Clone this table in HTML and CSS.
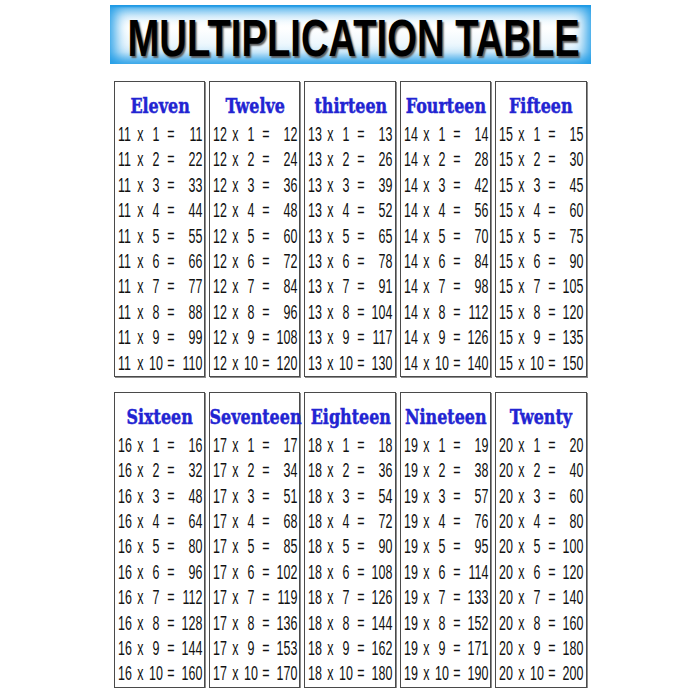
FILE: index.html
```html
<!DOCTYPE html>
<html>
<head>
<meta charset="utf-8">
<title>Multiplication Table</title>
<link rel="stylesheet" href="styles.css">
</head>
<body>
<div class="page">
  <div class="banner"><span class="banner-title">MULTIPLICATION TABLE</span></div>
  <div class="tables">
    <div class="card">
      <div class="name"><span>Eleven</span></div>
      <div class="row"><span class="a">11</span><span class="x">x</span><span class="b">1</span><span class="e">=</span><span class="c">11</span></div>
      <div class="row"><span class="a">11</span><span class="x">x</span><span class="b">2</span><span class="e">=</span><span class="c">22</span></div>
      <div class="row"><span class="a">11</span><span class="x">x</span><span class="b">3</span><span class="e">=</span><span class="c">33</span></div>
      <div class="row"><span class="a">11</span><span class="x">x</span><span class="b">4</span><span class="e">=</span><span class="c">44</span></div>
      <div class="row"><span class="a">11</span><span class="x">x</span><span class="b">5</span><span class="e">=</span><span class="c">55</span></div>
      <div class="row"><span class="a">11</span><span class="x">x</span><span class="b">6</span><span class="e">=</span><span class="c">66</span></div>
      <div class="row"><span class="a">11</span><span class="x">x</span><span class="b">7</span><span class="e">=</span><span class="c">77</span></div>
      <div class="row"><span class="a">11</span><span class="x">x</span><span class="b">8</span><span class="e">=</span><span class="c">88</span></div>
      <div class="row"><span class="a">11</span><span class="x">x</span><span class="b">9</span><span class="e">=</span><span class="c">99</span></div>
      <div class="row"><span class="a">11</span><span class="x">x</span><span class="b">10</span><span class="e">=</span><span class="c">110</span></div>
    </div>
    <div class="card">
      <div class="name"><span>Twelve</span></div>
      <div class="row"><span class="a">12</span><span class="x">x</span><span class="b">1</span><span class="e">=</span><span class="c">12</span></div>
      <div class="row"><span class="a">12</span><span class="x">x</span><span class="b">2</span><span class="e">=</span><span class="c">24</span></div>
      <div class="row"><span class="a">12</span><span class="x">x</span><span class="b">3</span><span class="e">=</span><span class="c">36</span></div>
      <div class="row"><span class="a">12</span><span class="x">x</span><span class="b">4</span><span class="e">=</span><span class="c">48</span></div>
      <div class="row"><span class="a">12</span><span class="x">x</span><span class="b">5</span><span class="e">=</span><span class="c">60</span></div>
      <div class="row"><span class="a">12</span><span class="x">x</span><span class="b">6</span><span class="e">=</span><span class="c">72</span></div>
      <div class="row"><span class="a">12</span><span class="x">x</span><span class="b">7</span><span class="e">=</span><span class="c">84</span></div>
      <div class="row"><span class="a">12</span><span class="x">x</span><span class="b">8</span><span class="e">=</span><span class="c">96</span></div>
      <div class="row"><span class="a">12</span><span class="x">x</span><span class="b">9</span><span class="e">=</span><span class="c">108</span></div>
      <div class="row"><span class="a">12</span><span class="x">x</span><span class="b">10</span><span class="e">=</span><span class="c">120</span></div>
    </div>
    <div class="card">
      <div class="name"><span>thirteen</span></div>
      <div class="row"><span class="a">13</span><span class="x">x</span><span class="b">1</span><span class="e">=</span><span class="c">13</span></div>
      <div class="row"><span class="a">13</span><span class="x">x</span><span class="b">2</span><span class="e">=</span><span class="c">26</span></div>
      <div class="row"><span class="a">13</span><span class="x">x</span><span class="b">3</span><span class="e">=</span><span class="c">39</span></div>
      <div class="row"><span class="a">13</span><span class="x">x</span><span class="b">4</span><span class="e">=</span><span class="c">52</span></div>
      <div class="row"><span class="a">13</span><span class="x">x</span><span class="b">5</span><span class="e">=</span><span class="c">65</span></div>
      <div class="row"><span class="a">13</span><span class="x">x</span><span class="b">6</span><span class="e">=</span><span class="c">78</span></div>
      <div class="row"><span class="a">13</span><span class="x">x</span><span class="b">7</span><span class="e">=</span><span class="c">91</span></div>
      <div class="row"><span class="a">13</span><span class="x">x</span><span class="b">8</span><span class="e">=</span><span class="c">104</span></div>
      <div class="row"><span class="a">13</span><span class="x">x</span><span class="b">9</span><span class="e">=</span><span class="c">117</span></div>
      <div class="row"><span class="a">13</span><span class="x">x</span><span class="b">10</span><span class="e">=</span><span class="c">130</span></div>
    </div>
    <div class="card">
      <div class="name"><span>Fourteen</span></div>
      <div class="row"><span class="a">14</span><span class="x">x</span><span class="b">1</span><span class="e">=</span><span class="c">14</span></div>
      <div class="row"><span class="a">14</span><span class="x">x</span><span class="b">2</span><span class="e">=</span><span class="c">28</span></div>
      <div class="row"><span class="a">14</span><span class="x">x</span><span class="b">3</span><span class="e">=</span><span class="c">42</span></div>
      <div class="row"><span class="a">14</span><span class="x">x</span><span class="b">4</span><span class="e">=</span><span class="c">56</span></div>
      <div class="row"><span class="a">14</span><span class="x">x</span><span class="b">5</span><span class="e">=</span><span class="c">70</span></div>
      <div class="row"><span class="a">14</span><span class="x">x</span><span class="b">6</span><span class="e">=</span><span class="c">84</span></div>
      <div class="row"><span class="a">14</span><span class="x">x</span><span class="b">7</span><span class="e">=</span><span class="c">98</span></div>
      <div class="row"><span class="a">14</span><span class="x">x</span><span class="b">8</span><span class="e">=</span><span class="c">112</span></div>
      <div class="row"><span class="a">14</span><span class="x">x</span><span class="b">9</span><span class="e">=</span><span class="c">126</span></div>
      <div class="row"><span class="a">14</span><span class="x">x</span><span class="b">10</span><span class="e">=</span><span class="c">140</span></div>
    </div>
    <div class="card">
      <div class="name"><span>Fifteen</span></div>
      <div class="row"><span class="a">15</span><span class="x">x</span><span class="b">1</span><span class="e">=</span><span class="c">15</span></div>
      <div class="row"><span class="a">15</span><span class="x">x</span><span class="b">2</span><span class="e">=</span><span class="c">30</span></div>
      <div class="row"><span class="a">15</span><span class="x">x</span><span class="b">3</span><span class="e">=</span><span class="c">45</span></div>
      <div class="row"><span class="a">15</span><span class="x">x</span><span class="b">4</span><span class="e">=</span><span class="c">60</span></div>
      <div class="row"><span class="a">15</span><span class="x">x</span><span class="b">5</span><span class="e">=</span><span class="c">75</span></div>
      <div class="row"><span class="a">15</span><span class="x">x</span><span class="b">6</span><span class="e">=</span><span class="c">90</span></div>
      <div class="row"><span class="a">15</span><span class="x">x</span><span class="b">7</span><span class="e">=</span><span class="c">105</span></div>
      <div class="row"><span class="a">15</span><span class="x">x</span><span class="b">8</span><span class="e">=</span><span class="c">120</span></div>
      <div class="row"><span class="a">15</span><span class="x">x</span><span class="b">9</span><span class="e">=</span><span class="c">135</span></div>
      <div class="row"><span class="a">15</span><span class="x">x</span><span class="b">10</span><span class="e">=</span><span class="c">150</span></div>
    </div>
    <div class="card">
      <div class="name"><span>Sixteen</span></div>
      <div class="row"><span class="a">16</span><span class="x">x</span><span class="b">1</span><span class="e">=</span><span class="c">16</span></div>
      <div class="row"><span class="a">16</span><span class="x">x</span><span class="b">2</span><span class="e">=</span><span class="c">32</span></div>
      <div class="row"><span class="a">16</span><span class="x">x</span><span class="b">3</span><span class="e">=</span><span class="c">48</span></div>
      <div class="row"><span class="a">16</span><span class="x">x</span><span class="b">4</span><span class="e">=</span><span class="c">64</span></div>
      <div class="row"><span class="a">16</span><span class="x">x</span><span class="b">5</span><span class="e">=</span><span class="c">80</span></div>
      <div class="row"><span class="a">16</span><span class="x">x</span><span class="b">6</span><span class="e">=</span><span class="c">96</span></div>
      <div class="row"><span class="a">16</span><span class="x">x</span><span class="b">7</span><span class="e">=</span><span class="c">112</span></div>
      <div class="row"><span class="a">16</span><span class="x">x</span><span class="b">8</span><span class="e">=</span><span class="c">128</span></div>
      <div class="row"><span class="a">16</span><span class="x">x</span><span class="b">9</span><span class="e">=</span><span class="c">144</span></div>
      <div class="row"><span class="a">16</span><span class="x">x</span><span class="b">10</span><span class="e">=</span><span class="c">160</span></div>
    </div>
    <div class="card">
      <div class="name"><span>Seventeen</span></div>
      <div class="row"><span class="a">17</span><span class="x">x</span><span class="b">1</span><span class="e">=</span><span class="c">17</span></div>
      <div class="row"><span class="a">17</span><span class="x">x</span><span class="b">2</span><span class="e">=</span><span class="c">34</span></div>
      <div class="row"><span class="a">17</span><span class="x">x</span><span class="b">3</span><span class="e">=</span><span class="c">51</span></div>
      <div class="row"><span class="a">17</span><span class="x">x</span><span class="b">4</span><span class="e">=</span><span class="c">68</span></div>
      <div class="row"><span class="a">17</span><span class="x">x</span><span class="b">5</span><span class="e">=</span><span class="c">85</span></div>
      <div class="row"><span class="a">17</span><span class="x">x</span><span class="b">6</span><span class="e">=</span><span class="c">102</span></div>
      <div class="row"><span class="a">17</span><span class="x">x</span><span class="b">7</span><span class="e">=</span><span class="c">119</span></div>
      <div class="row"><span class="a">17</span><span class="x">x</span><span class="b">8</span><span class="e">=</span><span class="c">136</span></div>
      <div class="row"><span class="a">17</span><span class="x">x</span><span class="b">9</span><span class="e">=</span><span class="c">153</span></div>
      <div class="row"><span class="a">17</span><span class="x">x</span><span class="b">10</span><span class="e">=</span><span class="c">170</span></div>
    </div>
    <div class="card">
      <div class="name"><span>Eighteen</span></div>
      <div class="row"><span class="a">18</span><span class="x">x</span><span class="b">1</span><span class="e">=</span><span class="c">18</span></div>
      <div class="row"><span class="a">18</span><span class="x">x</span><span class="b">2</span><span class="e">=</span><span class="c">36</span></div>
      <div class="row"><span class="a">18</span><span class="x">x</span><span class="b">3</span><span class="e">=</span><span class="c">54</span></div>
      <div class="row"><span class="a">18</span><span class="x">x</span><span class="b">4</span><span class="e">=</span><span class="c">72</span></div>
      <div class="row"><span class="a">18</span><span class="x">x</span><span class="b">5</span><span class="e">=</span><span class="c">90</span></div>
      <div class="row"><span class="a">18</span><span class="x">x</span><span class="b">6</span><span class="e">=</span><span class="c">108</span></div>
      <div class="row"><span class="a">18</span><span class="x">x</span><span class="b">7</span><span class="e">=</span><span class="c">126</span></div>
      <div class="row"><span class="a">18</span><span class="x">x</span><span class="b">8</span><span class="e">=</span><span class="c">144</span></div>
      <div class="row"><span class="a">18</span><span class="x">x</span><span class="b">9</span><span class="e">=</span><span class="c">162</span></div>
      <div class="row"><span class="a">18</span><span class="x">x</span><span class="b">10</span><span class="e">=</span><span class="c">180</span></div>
    </div>
    <div class="card">
      <div class="name"><span>Nineteen</span></div>
      <div class="row"><span class="a">19</span><span class="x">x</span><span class="b">1</span><span class="e">=</span><span class="c">19</span></div>
      <div class="row"><span class="a">19</span><span class="x">x</span><span class="b">2</span><span class="e">=</span><span class="c">38</span></div>
      <div class="row"><span class="a">19</span><span class="x">x</span><span class="b">3</span><span class="e">=</span><span class="c">57</span></div>
      <div class="row"><span class="a">19</span><span class="x">x</span><span class="b">4</span><span class="e">=</span><span class="c">76</span></div>
      <div class="row"><span class="a">19</span><span class="x">x</span><span class="b">5</span><span class="e">=</span><span class="c">95</span></div>
      <div class="row"><span class="a">19</span><span class="x">x</span><span class="b">6</span><span class="e">=</span><span class="c">114</span></div>
      <div class="row"><span class="a">19</span><span class="x">x</span><span class="b">7</span><span class="e">=</span><span class="c">133</span></div>
      <div class="row"><span class="a">19</span><span class="x">x</span><span class="b">8</span><span class="e">=</span><span class="c">152</span></div>
      <div class="row"><span class="a">19</span><span class="x">x</span><span class="b">9</span><span class="e">=</span><span class="c">171</span></div>
      <div class="row"><span class="a">19</span><span class="x">x</span><span class="b">10</span><span class="e">=</span><span class="c">190</span></div>
    </div>
    <div class="card">
      <div class="name"><span>Twenty</span></div>
      <div class="row"><span class="a">20</span><span class="x">x</span><span class="b">1</span><span class="e">=</span><span class="c">20</span></div>
      <div class="row"><span class="a">20</span><span class="x">x</span><span class="b">2</span><span class="e">=</span><span class="c">40</span></div>
      <div class="row"><span class="a">20</span><span class="x">x</span><span class="b">3</span><span class="e">=</span><span class="c">60</span></div>
      <div class="row"><span class="a">20</span><span class="x">x</span><span class="b">4</span><span class="e">=</span><span class="c">80</span></div>
      <div class="row"><span class="a">20</span><span class="x">x</span><span class="b">5</span><span class="e">=</span><span class="c">100</span></div>
      <div class="row"><span class="a">20</span><span class="x">x</span><span class="b">6</span><span class="e">=</span><span class="c">120</span></div>
      <div class="row"><span class="a">20</span><span class="x">x</span><span class="b">7</span><span class="e">=</span><span class="c">140</span></div>
      <div class="row"><span class="a">20</span><span class="x">x</span><span class="b">8</span><span class="e">=</span><span class="c">160</span></div>
      <div class="row"><span class="a">20</span><span class="x">x</span><span class="b">9</span><span class="e">=</span><span class="c">180</span></div>
      <div class="row"><span class="a">20</span><span class="x">x</span><span class="b">10</span><span class="e">=</span><span class="c">200</span></div>
    </div>
  </div>
</div>
</body>
</html>
```

FILE: styles.css
```css
html, body {
  margin: 0;
  padding: 0;
  background: #ffffff;
}

.page {
  padding-top: 5px;
  display: flex;
  flex-direction: column;
  align-items: center;
}

.banner {
  width: 481px;
  height: 59px;
  box-sizing: border-box;
  padding: 7px 0 0 7px;
  display: flex;
  align-items: center;
  justify-content: center;
  background: linear-gradient(180deg, #eef7fd 0%, #ffffff 40%, #e4f3fc 80%, #9fd3f4 100%);
  box-shadow: inset 0 0 14px 5px #1d9be6, inset 0 3px 2px -1px #1b8fdf;
}

.banner-title {
  display: inline-block;
  font-family: "Liberation Sans", Arial, sans-serif;
  font-weight: 700;
  font-size: 52px;
  line-height: 52px;
  color: #000000;
  white-space: nowrap;
  transform: scaleX(0.735);
  text-shadow: 2px 2px 2px #5a5a5a;
}

.tables {
  margin-top: 17px;
  width: 473px;
  display: grid;
  grid-template-columns: repeat(5, 1fr);
  column-gap: 4px;
  row-gap: 15px;
}

.card {
  border: 1px solid #4a4a4a;
  box-shadow: 1px 1px 0 #8c8c8c;
  background: #ffffff;
  padding: 7px 2px 0 3px;
  min-width: 0;
}

.name {
  height: 33px;
  display: flex;
  justify-content: center;
  align-items: center;
  white-space: nowrap;
}

.name span {
  display: inline-block;
  font-family: "DejaVu Serif", "Liberation Serif", serif;
  font-weight: 700;
  font-size: 21px;
  line-height: 33px;
  color: #2224d2;
  -webkit-text-stroke: 0.5px #2224d2;
  transform: scaleX(0.76);
}

/* Rows are laid out at full width, then condensed horizontally to
   mimic the narrow numeric face of the reference. */
.row {
  display: grid;
  width: 156.25%;
  grid-template-columns: 25px 20.3px 28.1px 18.75px 1fr;
  height: 25.4px;
  line-height: 25.4px;
  font-family: "Liberation Sans", Arial, sans-serif;
  font-size: 19.5px;
  color: #111111;
  transform: scaleX(0.64);
  transform-origin: 0 0;
}

.row span {
  white-space: nowrap;
}

.row .a {
  justify-self: start;
}

.row .x,
.row .b,
.row .e {
  justify-self: center;
}

.row .c {
  justify-self: end;
}
```
